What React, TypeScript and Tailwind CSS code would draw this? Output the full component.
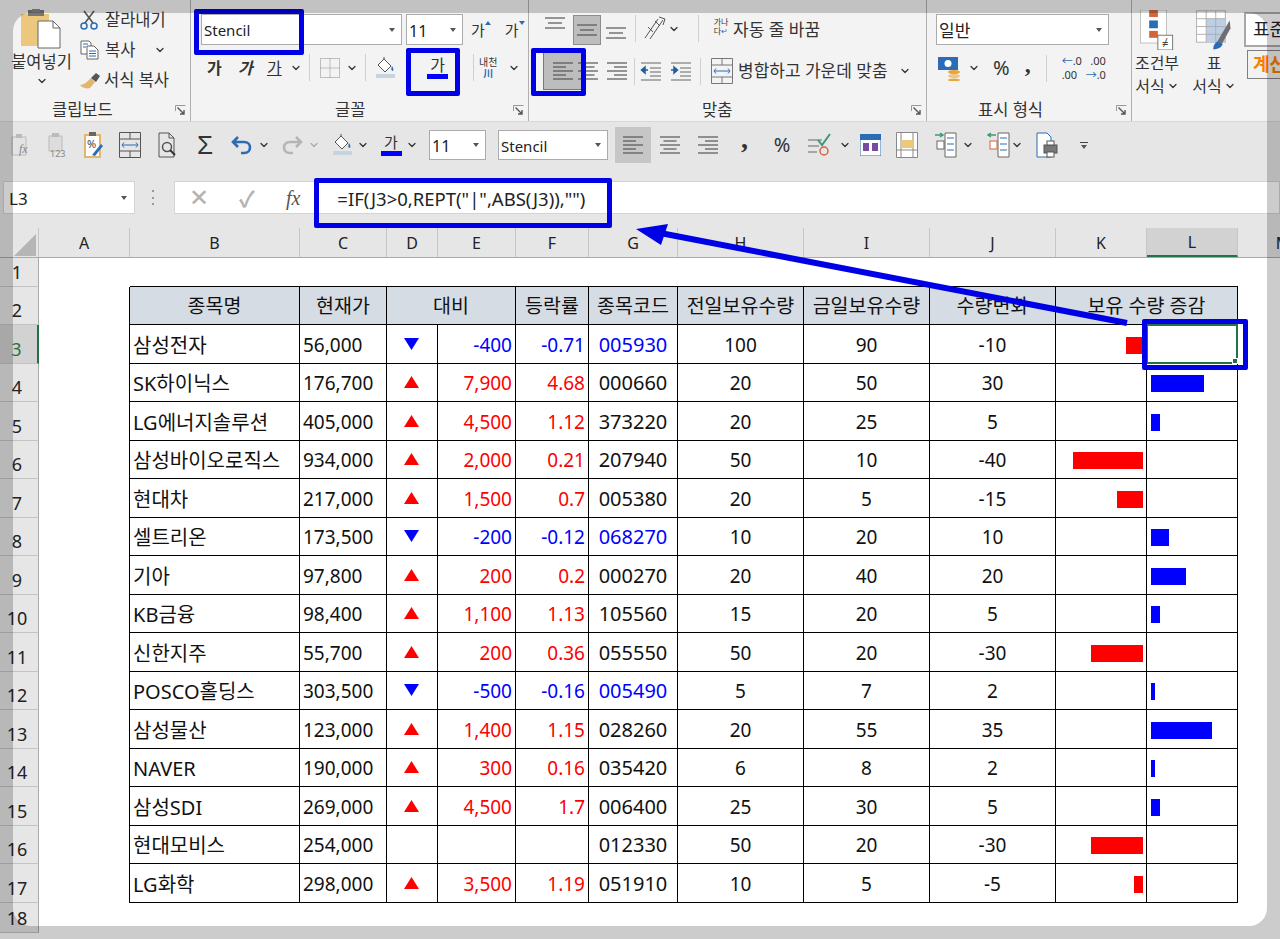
import { ChevronDown } from 'lucide-react'
import type { ReactNode } from 'react'

const COLS = 'grid grid-cols-[39px_91px_170px_87px_51px_78px_73px_89px_126px_126px_126px_91px_91px_91px]'

const rows = [
  ['삼성전자', '56,000', 'down', '-400', '-0.71', '005930', '100', '90', -10],
  ['SK하이닉스', '176,700', 'up', '7,900', '4.68', '000660', '20', '50', 30],
  ['LG에너지솔루션', '405,000', 'up', '4,500', '1.12', '373220', '20', '25', 5],
  ['삼성바이오로직스', '934,000', 'up', '2,000', '0.21', '207940', '50', '10', -40],
  ['현대차', '217,000', 'up', '1,500', '0.7', '005380', '20', '5', -15],
  ['셀트리온', '173,500', 'down', '-200', '-0.12', '068270', '10', '20', 10],
  ['기아', '97,800', 'up', '200', '0.2', '000270', '20', '40', 20],
  ['KB금융', '98,400', 'up', '1,100', '1.13', '105560', '15', '20', 5],
  ['신한지주', '55,700', 'up', '200', '0.36', '055550', '50', '20', -30],
  ['POSCO홀딩스', '303,500', 'down', '-500', '-0.16', '005490', '5', '7', 2],
  ['삼성물산', '123,000', 'up', '1,400', '1.15', '028260', '20', '55', 35],
  ['NAVER', '190,000', 'up', '300', '0.16', '035420', '6', '8', 2],
  ['삼성SDI', '269,000', 'up', '4,500', '1.7', '006400', '25', '30', 5],
  ['현대모비스', '254,000', '', '', '', '012330', '50', '20', -30],
  ['LG화학', '298,000', 'up', '3,500', '1.19', '051910', '10', '5', -5],
] as const

const Chev = ({ className = '' }: { className?: string }) => (
  <ChevronDown className={`h-3 w-3 shrink-0 text-[#333] ${className}`} strokeWidth={2.5} />
)

const Caret = () => <span className="h-0 w-0 border-x-[3.5px] border-t-[4px] border-x-transparent border-t-[#555]" />

const Launcher = () => (
  <svg width="11" height="11" viewBox="0 0 11 11" fill="none" stroke="#555">
    <path d="M.5 6V.5H10.5" stroke="#999" />
    <path d="M2.5 2.5L9 9M9 5v4H5" strokeWidth="1.4" />
  </svg>
)

function Lines({ kind }: { kind: 'left' | 'center' | 'right' }) {
  const ys = [2, 6, 10, 14, 18]
  const x = (i: number) => {
    const w = i % 2 ? 13 : 20
    if (kind === 'left') return [0, w]
    if (kind === 'right') return [20 - w, 20]
    return [(20 - w) / 2, (20 + w) / 2]
  }
  return (
    <svg width="20" height="20" viewBox="0 0 20 20" stroke="#555" strokeWidth="1.2">
      {ys.map((y, i) => (
        <line key={y} x1={x(i)[0]} x2={x(i)[1]} y1={y} y2={y} />
      ))}
    </svg>
  )
}

const VLines = ({ y }: { y: number }) => (
  <svg width="20" height="24" viewBox="0 0 20 24" stroke="#555" strokeWidth="1.2">
    {[0, 5, 10].map((d) => (
      <line key={d} x1={d === 5 ? 3 : 0} x2={d === 5 ? 17 : 20} y1={y + d} y2={y + d} />
    ))}
  </svg>
)

const Indent = ({ flip }: { flip?: boolean }) => (
  <svg width="22" height="20" viewBox="0 0 22 20" fill="none">
    <path d="M1 2h20M10 7h11M10 11h11M10 15h11M1 19h20" stroke="#666" />
    <path d={flip ? 'M1 9h5M4 6l3.5 3L4 12z' : 'M8 9H3M5 6L1.5 9 5 12z'} stroke="#1f5f9e" fill="#1f5f9e" strokeWidth="1.5" />
  </svg>
)

const ClipboardIcon = () => (
  <svg width="42" height="44" viewBox="0 0 42 44">
    <rect x="0" y="5" width="28" height="32" fill="#eec77e" />
    <rect x="7" y="1" width="16" height="6" fill="#777" />
    <rect x="11" y="-1" width="8" height="4" fill="#888" />
    <path d="M17 12h15l7 7v20H17z" fill="#fff" stroke="#666" />
    <path d="M32 12v7h7" fill="none" stroke="#666" />
  </svg>
)

const Scissors = () => (
  <svg width="18" height="20" viewBox="0 0 18 20" fill="none">
    <path d="M4 1l9 12M14 1L5 13" stroke="#555" strokeWidth="1.6" />
    <circle cx="4" cy="16" r="3" stroke="#2a6db5" strokeWidth="1.5" />
    <circle cx="14" cy="16" r="3" stroke="#2a6db5" strokeWidth="1.5" />
  </svg>
)

const CopyIcon = () => (
  <svg width="19" height="20" viewBox="0 0 19 20" fill="#fff" stroke="#666">
    <path d="M1 1h8l2 2v11H1z" />
    <path d="M7 6h7l4 4v9H7z" />
    <path d="M9 11h7M9 13.500h7M9 16h7M3 4h5M3 7h3" stroke="#2a6db5" />
  </svg>
)

const BrushIcon = () => (
  <svg width="22" height="18" viewBox="0 0 22 18">
    <path d="M12 7l4 4-5 6c-3 1-8 0-10-3 4 0 7-3 11-7z" fill="#e2b76d" />
    <path d="M12 7l5-5 4 3-4 6z" fill="#555" />
  </svg>
)

const FillIcon = ({ bar = '#c8d3e0' }: { bar?: string }) => (
  <svg width="20" height="22" viewBox="0 0 20 22" fill="none">
    <path d="M8 2l7 7-6 6-7-7z" fill="#fff" stroke="#555" />
    <path d="M8 2V0" stroke="#555" />
    <path d="M16 9c1 2 2 3 1 5-2 0-2-3-1-5z" fill="#2a6db5" />
    <rect x="0" y="17" width="19" height="4" fill={bar} />
  </svg>
)

const GridIcon = () => (
  <svg width="20" height="20" viewBox="0 0 20 20" fill="none" stroke="#8a8a8a" strokeDasharray="1 1">
    <path d="M.5.500h19v19H.5zM10 .5v19M.5 10h19" />
  </svg>
)

const Box = ({ w, text, h = 'h-[31px]', cls = 'text-[15px]' }: { w: string; text: string; h?: string; cls?: string }) => (
  <div className={`flex ${w} ${h} ${cls} items-center justify-between border border-[#ababab] bg-white pl-[2px] pr-[6px] text-[#222]`}>
    <span className="pt-[2px]">{text}</span>
    <Caret />
  </div>
)

// 글꼴 크게/작게 버튼
const FontStep = ({ up, cls }: { up?: boolean; cls: string }) => (
  <span className={`flex items-start ${cls}`}>
    <span className="text-[15px] leading-[20px]">가</span>
    <span
      className={`mt-[1px] h-0 w-0 border-x-[3px] border-x-transparent ${up ? 'border-b-[4px] border-b-[#2a6db5]' : 'border-t-[4px] border-t-[#2a6db5]'}`}
    />
  </span>
)

function Group({ w, label, labelCls, children }: { w: string; label: string; labelCls: string; children: ReactNode }) {
  return (
    <div className={`flex ${w} shrink-0 flex-col border-r border-[#b0b0b0]`}>
      <div className="h-[97px]">{children}</div>
      <div className="flex h-[24px] items-center pr-[4px] pt-[3px] text-[16.500px] text-[#333]">
        <span className={labelCls}>{label}</span>
        <span className="ml-auto">
          <Launcher />
        </span>
      </div>
    </div>
  )
}

const Sep = ({ h = 'h-[27px]', cls = 'mx-[7px]' }: { h?: string; cls?: string }) => (
  <div className={`${h} ${cls} w-px shrink-0 bg-[#d0d0d0]`} />
)

function Ribbon() {
  return (
    <div className="flex h-[122px] overflow-hidden border-b border-[#d8d8d8] bg-[#f3f3f3] text-[16.500px] text-[#333]">
      <Group w="w-[191px]" label="클립보드" labelCls="ml-[52px]">
        <div className="flex">
          <div className="flex w-[80px] flex-col items-center pl-[3px] pt-[9px]">
            <ClipboardIcon />
            <span className="mt-[-1px] whitespace-nowrap text-[16.500px] leading-[20px]">붙여넣기</span>
            <Chev className="mt-[3px]" />
          </div>
          <div className="flex flex-col pt-[5px]">
            <div className="flex h-[30px] items-center gap-[7px]">
              <Scissors />
              <span>잘라내기</span>
            </div>
            <div className="flex h-[30px] items-center gap-[6px]">
              <CopyIcon />
              <span>복사</span>
              <Chev className="ml-[13px]" />
            </div>
            <div className="ml-[-1px] flex h-[30px] items-center gap-[3px]">
              <BrushIcon />
              <span>서식 복사</span>
            </div>
          </div>
        </div>
      </Group>

      <Group w="w-[338px]" label="글꼴" labelCls="ml-[144px]">
        <div className="flex items-center pl-[10px] pt-[14px]">
          <Box w="w-[201px]" text="Stencil" />
          <Box w="w-[57px] ml-[4px]" text="11" cls="text-[16px]" />
          <FontStep up cls="ml-[8px]" />
          <FontStep cls="ml-[14px]" />
        </div>
        <div className="mt-[9px] flex items-center pl-[16px] text-[16px]">
          <span className="w-[31px] font-bold">가</span>
          <span className="w-[29px] font-bold italic">가</span>
          <span className="w-[22px] underline">가</span>
          <Chev className="ml-[1px]" />
          <Sep cls="ml-[7px] mr-[10px]" />
          <GridIcon />
          <Chev className="ml-[6px]" />
          <Sep cls="ml-[7px] mr-[10px]" />
          <FillIcon />
          <span className="ml-[31px] flex flex-col items-center leading-[17px]">
            <span>가</span>
            <span className="h-[5px] w-[21px] bg-[#0000ff]" />
          </span>
          <Sep cls="ml-[25px] mr-[5px]" />
          <span className="flex flex-col items-center text-[10px] leading-[11px]">
            <span>내천</span>
            <span className="font-bold text-[#2a6db5]">川</span>
          </span>
          <Chev className="ml-[11px]" />
        </div>
      </Group>

      <Group w="w-[398px]" label="맞춤" labelCls="ml-[173px]">
        <div className="flex h-[46px] items-start pl-[16px] pt-[15px]">
          <VLines y={3} />
          <div className="ml-[8px] flex h-[30px] w-[28px] items-center justify-center border border-[#8d8d8d] bg-[#bdbdbd]">
            <VLines y={7} />
          </div>
          <div className="ml-[5px] mt-[5px]"><VLines y={8} /></div>
          <Sep cls="ml-[9px] mr-[8px]" />
          <svg width="23" height="26" viewBox="0 0 23 26" fill="none" stroke="#555">
            <path d="M1 23L14 4M6 24L19 5M15 2l6 2-2 6" />
            <path d="M4 12l5 5M11 6l5 5" />
          </svg>
          <Chev className="ml-[1px] mt-[8px]" />
          <Sep cls="ml-[18px] mr-[12px]" />
          <span className="mt-[2px] w-[20px] text-center text-[8px] leading-[9px]">가나<br />다<span className="text-[#2a6db5]">↵</span></span>
          <span className="ml-[2px] mt-[1px] text-[17px] leading-[28px]">자동 줄 바꿈</span>
        </div>
        <div className="mt-[6px] flex items-center pl-[14px]">
          <div className="flex h-[38px] w-[39px] shrink-0 items-center justify-center border border-[#777] bg-[#bdbdbd]">
            <Lines kind="left" />
          </div>
          <div className="ml-[-4px] flex w-[20px] justify-center"><Lines kind="center" /></div>
          <div className="ml-[9px] flex w-[20px] justify-center"><Lines kind="right" /></div>
          <Sep cls="ml-[7px] mr-[5px]" />
          <Indent />
          <span className="ml-[8px]"><Indent flip /></span>
          <Sep cls="ml-[8px] mr-[10px]" />
          <svg width="22" height="26" viewBox="0 0 22 26" fill="none" stroke="#777" className="shrink-0">
            <path d="M.5.500h21v25H.5zM.5 7h21M.5 19h21M11 .5V7M11 19v7" />
            <path d="M3 13h16M5 10.500L3 13l2 2.500M17 10.500l2 2.500-2 2.500" stroke="#2a6db5" />
          </svg>
          <span className="ml-[5px] whitespace-nowrap text-[17px]">병합하고 가운데 맞춤</span>
          <Chev className="ml-[11px]" />
        </div>
      </Group>

      <Group w="w-[205px]" label="표시 형식" labelCls="ml-[51px]">
        <div className="pl-[9px] pt-[14px]">
          <Box w="w-[173px]" text="일반" cls="text-[17px]" />
        </div>
        <div className="mt-[8px] flex items-center pl-[11px]">
          <svg width="24" height="25" viewBox="0 0 24 25">
            <rect x="0" y="1" width="20" height="13" fill="#2a6db5" />
            <circle cx="10" cy="7.500" r="3.500" fill="#fff" />
            <ellipse cx="16" cy="16" rx="6" ry="2" fill="#e8a33d" />
            <ellipse cx="16" cy="20" rx="6" ry="2" fill="#eec77e" />
            <ellipse cx="16" cy="24" rx="6" ry="1.500" fill="#e8a33d" />
          </svg>
          <Chev className="ml-[6px]" />
          <span className="ml-[13px] text-[20px]">%</span>
          <span className="mb-[8px] ml-[15px] font-['Liberation_Serif',serif] text-[24px] font-bold leading-[20px]">,</span>
          <Sep cls="ml-[15px] mr-[15px]" />
          <div className="flex w-[24px] flex-col text-[11px] leading-[14px]">
            <span><span className="text-[#2a6db5]">←</span>.0</span>
            <span>.00</span>
          </div>
          <div className="flex flex-col text-[11px] leading-[14px]">
            <span className="text-right">.00</span>
            <span><span className="text-[#2a6db5]">→</span>.0</span>
          </div>
        </div>
      </Group>

      <div className="flex pt-[10px]">
        <div className="flex w-[50px] flex-col items-center">
          <svg width="36" height="40" viewBox="0 0 38 46">
            <rect x="0" y="0" width="30" height="38" fill="#fff" stroke="#bbb" />
            <rect x="10" y="0" width="10" height="8" fill="#d4643a" />
            <rect x="10" y="12" width="10" height="9" fill="#2a6db5" />
            <rect x="10" y="24" width="10" height="8" fill="#d4643a" />
            <rect x="20" y="29" width="17" height="17" fill="#fff" stroke="#666" />
            <text x="28.500" y="42" textAnchor="middle" fontSize="13" fill="#444">≠</text>
          </svg>
          <span className="mt-[2px] whitespace-nowrap text-[16px] leading-[22px]">조건부</span>
          <span className="flex items-center whitespace-nowrap text-[16px] leading-[24px]">서식<Chev className="ml-[2px]" /></span>
        </div>
        <div className="ml-[8px] flex w-[48px] flex-col items-center">
          <svg width="40" height="40" viewBox="0 0 40 46">
            <rect x="0" y="1" width="33" height="36" fill="#fff" stroke="#aaa" />
            <rect x="11" y="10" width="22" height="27" fill="#bccfe6" />
            <path d="M11 1v36M22 1v36M0 10h33M0 19h33M0 28h33" stroke="#aaa" fill="none" />
            <path d="M38 12L24 36l5 3 10-18z" fill="#6e6e6e" />
            <path d="M24 36c-3 2-5 5-5 9 5 0 10-2 11-6z" fill="#2a6db5" />
          </svg>
          <span className="mt-[2px] text-[16px] leading-[22px]">표</span>
          <span className="flex items-center whitespace-nowrap text-[16px] leading-[24px]">서식<Chev className="ml-[2px]" /></span>
        </div>
        <div className="ml-[6px] flex w-[60px] flex-col gap-[3px] pt-[2px]">
          <div className="h-[35px] overflow-hidden whitespace-nowrap border-2 border-[#a8a8a8] bg-white pl-[7px] text-[18px] leading-[31px] text-[#222]">표준</div>
          <div className="ml-[3px] h-[29px] overflow-hidden whitespace-nowrap border border-[#7f7f7f] bg-[#f2f2f2] pl-[5px] text-[18px] font-bold leading-[27px] text-[#fa7d00]">계산</div>
        </div>
      </div>
    </div>
  )
}

const Slot = ({ w, children }: { w: string; children: ReactNode }) => (
  <div className={`flex ${w} shrink-0 items-center justify-center`}>{children}</div>
)

function QuickBar() {
  return (
    <div className="flex h-[58px] items-center bg-[#e6e6e6] pb-[12px] pl-[2px] text-[#333]">
      <Slot w="w-[36px]">
        <svg width="20" height="24" viewBox="0 0 20 24" fill="none">
          <path d="M2 4h14v18H2z" fill="#e3e3e3" stroke="#bbb" />
          <rect x="6" y="1" width="6" height="4" fill="#bbb" />
          <text x="9" y="20" fontSize="12" fontStyle="italic" fontFamily="Liberation Serif" fill="#888">fx</text>
        </svg>
      </Slot>
      <Slot w="w-[37px]">
        <svg width="22" height="26" viewBox="0 0 22 26" fill="none">
          <path d="M3 4h13v15H3z" fill="#ddd" stroke="#bbb" />
          <rect x="6" y="1" width="7" height="4" fill="#bbb" />
          <text x="4" y="25" fontSize="9" fontFamily="Noto Sans" fill="#888">123</text>
        </svg>
      </Slot>
      <Slot w="w-[37px]">
        <svg width="20" height="26" viewBox="0 0 20 26" fill="none">
          <path d="M1 3h15v22H1z" fill="#fff" stroke="#e2b76d" strokeWidth="2" />
          <rect x="5" y="0" width="7" height="4" fill="#666" />
          <text x="3" y="16" fontSize="11" fontFamily="Noto Sans" fill="#444">%</text>
          <path d="M8 23l9-11 2 2-8 10z" fill="#2a6db5" />
        </svg>
      </Slot>
      <Slot w="w-[36px]">
        <svg width="22" height="26" viewBox="0 0 22 26" fill="none" stroke="#555">
          <path d="M.5.500h21v25H.5zM.5 7h21M.5 19h21M11 .5V7M11 19v7" />
          <path d="M3 13h16M5 10.500L3 13l2 2.500M17 10.500l2 2.500-2 2.500" stroke="#2a6db5" />
        </svg>
      </Slot>
      <Slot w="w-[39px]">
        <svg width="20" height="26" viewBox="0 0 20 26" fill="none" stroke="#555">
          <path d="M1 1h10l5 5v19H1zM11 1v5h5" />
          <circle cx="9" cy="15" r="4.500" strokeWidth="1.500" />
          <path d="M12 18l5 5" strokeWidth="2" stroke="#333" />
        </svg>
      </Slot>
      <Slot w="w-[36px]">
        <span className="font-['Liberation_Sans',sans-serif] text-[26px] leading-none">Σ</span>
      </Slot>
      <span className="ml-[5px]" />
      <Slot w="w-[28px]">
        <svg width="22" height="20" viewBox="0 0 22 20" fill="none" stroke="#2a6db5" strokeWidth="2.600">
          <path d="M7 2L2 7l5 5M2 7h11c8 0 8 11 0 11h-3" />
        </svg>
      </Slot>
      <Chev className="ml-[2px] mr-[10px]" />
      <Slot w="w-[24px]">
        <svg width="22" height="20" viewBox="0 0 22 20" fill="none" stroke="#b5b5b5" strokeWidth="2.600">
          <path d="M15 2l5 5-5 5M20 7H9c-8 0-8 11 0 11h3" />
        </svg>
      </Slot>
      <Chev className="ml-[4px] mr-[11px] text-[#aaa]" />
      <Slot w="w-[24px]"><FillIcon /></Slot>
      <Chev className="ml-[2px] mr-[11px]" />
      <span className="flex w-[22px] flex-col items-center text-[15px] leading-[17px]">
        <span>가</span>
        <span className="h-[5px] w-[21px] bg-[#0000ff]" />
      </span>
      <Chev className="ml-[4px] mr-[11px]" />
      <Box w="w-[57px]" text="11" h="h-[30px]" cls="text-[16px]" />
      <Box w="w-[110px] ml-[12px]" text="Stencil" h="h-[30px]" />
      <div className="ml-[7px] flex h-[36px] w-[36px] items-center justify-center bg-[#c6c6c6]"><Lines kind="left" /></div>
      <Slot w="w-[38px]"><Lines kind="center" /></Slot>
      <Slot w="w-[37px]"><Lines kind="right" /></Slot>
      <Slot w="w-[37px]"><span className="mb-[12px] font-['Liberation_Serif',serif] text-[28px] font-bold leading-[18px]">,</span></Slot>
      <Slot w="w-[38px]"><span className="text-[20px]">%</span></Slot>
      <Slot w="w-[36px]">
        <svg width="24" height="24" viewBox="0 0 24 24" fill="none" stroke="#666">
          <path d="M1 7h14M1 13h11M1 19h9" />
          <path d="M11 7l4 5 8-11" stroke="#3a9a74" strokeWidth="2" />
          <circle cx="17" cy="18" r="4" stroke="#d4643a" strokeWidth="1.500" />
        </svg>
      </Slot>
      <Chev className="ml-[2px] mr-[5px]" />
      <Slot w="w-[28px]">
        <svg width="21" height="22" viewBox="0 0 21 22">
          <rect x="0" y="0" width="21" height="22" fill="#fff" stroke="#2a6db5" />
          <rect x="0" y="0" width="21" height="6" fill="#2a6db5" />
          <rect x="3" y="9" width="6" height="8" fill="#7a4a9e" />
          <rect x="12" y="9" width="6" height="8" fill="#7a4a9e" />
        </svg>
      </Slot>
      <Slot w="w-[46px]">
        <svg width="22" height="26" viewBox="0 0 22 26" fill="#fff" stroke="#888">
          <path d="M.5.500h21v25H.5z" />
          <path d="M.5 18h21M5 .5v25M17 .5v25" fill="none" />
          <rect x="5" y="8" width="12" height="8" fill="#eec77e" stroke="none" />
        </svg>
      </Slot>
      <Slot w="w-[32px]">
        <svg width="24" height="26" viewBox="0 0 24 26" fill="#fff" stroke="#666">
          <path d="M1 3h8M6 1l3 2-3 2" fill="none" stroke="#3a9a74" strokeWidth="1.500" />
          <path d="M11 1h11v24H11z" />
          <rect x="3" y="9" width="7" height="8" />
          <path d="M13 6h7M13 12h7M13 18h7" stroke="#2a6db5" />
        </svg>
      </Slot>
      <Chev className="mr-[11px]" />
      <Slot w="w-[28px]">
        <svg width="24" height="26" viewBox="0 0 24 26" fill="#fff" stroke="#666">
          <path d="M9 3H1M4 1L1 3l3 2" fill="none" stroke="#3a9a74" strokeWidth="1.500" />
          <path d="M11 1h11v24H11z" />
          <rect x="3" y="9" width="7" height="8" stroke="#d4643a" />
          <path d="M13 6h7M13 12h7M13 18h7" stroke="#2a6db5" />
        </svg>
      </Slot>
      <Chev className="ml-[-2px] mr-[11px]" />
      <Slot w="w-[26px]">
        <svg width="22" height="26" viewBox="0 0 22 26" fill="#fff" stroke="#555">
          <path d="M1 1h10l4 4v20H1z" stroke="#2a6db5" />
          <rect x="8" y="13" width="13" height="8" fill="#777" />
          <rect x="11" y="9" width="7" height="4" />
          <rect x="11" y="20" width="7" height="5" />
        </svg>
      </Slot>
      <Slot w="w-[48px]">
        <span className="flex flex-col items-center gap-[2px]">
          <span className="h-px w-[8px] bg-[#444]" />
          <Caret />
        </span>
      </Slot>
    </div>
  )
}

function FormulaBar() {
  return (
    <div className="flex h-[48px] items-start bg-[#e6e6e6] pl-[3px] pt-[1px]">
      <div className="flex h-[33px] w-[132px] items-center justify-between border border-[#d4d4d4] bg-white pl-[5px] pr-[7px] text-[17px] text-[#222]">
        <span className="pt-[2px]">L3</span>
        <Caret />
      </div>
      <div className="ml-[17px] mr-[20px] mt-[9px] flex h-[15px] flex-col justify-between">
        <span className="h-[2px] w-[2px] bg-[#999]" />
        <span className="h-[2px] w-[2px] bg-[#999]" />
        <span className="h-[2px] w-[2px] bg-[#999]" />
      </div>
      <div className="flex h-[33px] flex-1 items-center border border-[#d4d4d4] bg-white text-[#222]">
        <span className="ml-[14px] font-['Liberation_Sans',sans-serif] text-[24px] font-light leading-none text-[#b3b3b3]">✕</span>
        <span className="ml-[30px] text-[22px] font-bold leading-none text-[#b3b3b3]">✓</span>
        <span className="ml-[31px] font-['Liberation_Serif',serif] text-[20px] italic text-[#555]">fx</span>
        <span className="ml-[37px] pt-[2px] text-[18.500px]">=IF(J3&gt;0,REPT("|",ABS(J3)),"")</span>
      </div>
    </div>
  )
}

function ColumnHeader() {
  const letters = ['A', 'B', 'C', 'D', 'E', 'F', 'G', 'H', 'I', 'J', 'K', 'L', 'M']
  return (
    <div className={`${COLS} h-[30px] border-b border-[#a9a9a9] bg-[#e6e6e6] text-[16px] text-[#222]`}>
      <div className="flex items-end justify-end border-r border-[#c6c6c6] pb-[1px] pr-[2px]">
        <span className="h-0 w-0 border-b-[22px] border-l-[22px] border-b-[#b5b5b5] border-l-transparent" />
      </div>
      {letters.map((c) => (
        <div
          key={c}
          className={`flex items-center justify-center border-r border-[#c6c6c6] ${c === 'L' ? 'border-b-2 border-b-[#217346] bg-[#d2d2d2]' : ''}`}
        >
          {c}
        </div>
      ))}
    </div>
  )
}

const RowHead = ({ n, active }: { n: number; active?: boolean }) => (
  <div
    className={`flex items-end justify-center border-b border-r border-b-[#c4c4c4] pb-[2px] pr-[4px] text-[18px] leading-[24px] ${
      active ? 'border-r-2 border-r-[#217346] bg-[#d2d2d2] text-[#217346]' : 'border-r-[#a9a9a9] bg-[#e6e6e6] text-[#222]'
    }`}
  >
    {n}
  </div>
)

const cell = 'flex items-center border-b border-r border-black'

function Sheet() {
  return (
    <div className="bg-white text-[19px] leading-[24px] text-[#111]">
      <div className={`${COLS} h-[29px]`}>
        <RowHead n={1} />
        <div className="col-start-3 col-span-11 border-b border-black" />
      </div>

      <div className={`${COLS} h-[38px]`}>
        <RowHead n={2} />
        <div className="border-r border-black" />
        {[
          ['종목명', 'col-span-1'],
          ['현재가', 'col-span-1'],
          ['대비', 'col-span-2'],
          ['등락률', 'col-span-1'],
          ['종목코드', 'col-span-1'],
          ['전일보유수량', 'col-span-1'],
          ['금일보유수량', 'col-span-1'],
          ['수량변화', 'col-span-1'],
          ['보유 수량 증감', 'col-span-2'],
        ].map(([t, span]) => (
          <div key={t} className={`${cell} ${span} justify-center whitespace-nowrap bg-[#d6dce4] text-[19.500px]`}>
            {t}
          </div>
        ))}
      </div>

      {rows.map((r, i) => {
        const [name, price, dir, diff, rate, code, prev, today, change] = r
        const color = dir === 'up' ? 'text-[#ff0000]' : dir === 'down' ? 'text-[#0000ff]' : ''
        return (
          <div key={name} className={`${COLS} h-[38.500px]`}>
            <RowHead n={i + 3} active={i === 0} />
            <div className="border-r border-black" />
            <div className={`${cell} whitespace-nowrap pl-[3px] pt-[4px] text-[20px]`}>{name}</div>
            <div className={`${cell} pl-[3px] pt-[2px]`}>{price}</div>
            <div className={`${cell} justify-center pr-[1px]`}>
              {dir === 'up' && (
                <svg width="15" height="12" viewBox="0 0 15 12"><path d="M7.500 0L15 12H0z" fill="#ff0000" /></svg>
              )}
              {dir === 'down' && (
                <svg width="15" height="12" viewBox="0 0 15 12"><path d="M0 0h15L7.500 12z" fill="#0000ff" /></svg>
              )}
            </div>
            <div className={`${cell} justify-end pr-[3px] pt-[2px] ${color}`}>{diff}</div>
            <div className={`${cell} justify-end pr-[3px] pt-[2px] ${color}`}>{rate}</div>
            <div className={`${cell} justify-center pt-[2px] text-[20px] ${dir === 'down' ? 'text-[#0000ff]' : ''}`}>{code}</div>
            <div className={`${cell} justify-center pt-[2px]`}>{prev}</div>
            <div className={`${cell} justify-center pt-[2px]`}>{today}</div>
            <div className={`${cell} justify-center pt-[2px]`}>{change}</div>
            <div className={`${cell} justify-end pr-[3px] pt-[3px]`}>
              {change < 0 && <div className="h-[17px] bg-[#ff0000]" style={{ width: -change * 1.75 }} />}
            </div>
            <div className={`${cell} relative pl-[4px] pt-[3px]`}>
              {change > 0 && <div className="h-[17px] bg-[#0000ff]" style={{ width: change * 1.75 }} />}
              {i === 0 && (
                <span className="absolute inset-[-1px] border-2 border-[#217346]">
                  <span className="absolute bottom-[-2px] right-[-2px] h-[6px] w-[6px] border border-white bg-[#217346]" />
                </span>
              )}
            </div>
          </div>
        )
      })}

      <div className={`${COLS} h-[30px]`}>
        <RowHead n={18} />
      </div>
    </div>
  )
}

const Mark = ({ cls }: { cls: string }) => (
  <div className={`pointer-events-none absolute rounded-[2px] border-[5px] border-[#0000e6] ${cls}`} />
)

export default function App() {
  return (
    <div className="relative h-[939px] w-[1280px] overflow-hidden bg-white font-['Noto_Sans','Noto_Sans_CJK_KR',sans-serif]">
      <Ribbon />
      <QuickBar />
      <FormulaBar />
      <ColumnHeader />
      <Sheet />

      {/* 캡처 위에 그린 표시들 */}
      <Mark cls="left-[194px] top-[9px] h-[46px] w-[110px]" />
      <Mark cls="left-[406px] top-[48px] h-[48px] w-[54px]" />
      <Mark cls="left-[531px] top-[48px] h-[48px] w-[55px]" />
      <Mark cls="left-[314px] top-[178px] h-[50px] w-[298px]" />
      <Mark cls="left-[1142px] top-[319px] h-[51px] w-[106px]" />
      <svg className="pointer-events-none absolute left-0 top-0" width="1280" height="939" viewBox="0 0 1280 939">
        <path d="M1127 323L655 232" stroke="#0000e6" strokeWidth="6" />
        <path d="M636 229L668 224L661 245z" fill="#0000e6" />
      </svg>

      <div className="pointer-events-none absolute left-[13px] top-[13px] h-[913px] w-[1254px] rounded-[18px] shadow-[0_0_0_200px_rgba(0,0,0,0.2)]" />
    </div>
  )
}
